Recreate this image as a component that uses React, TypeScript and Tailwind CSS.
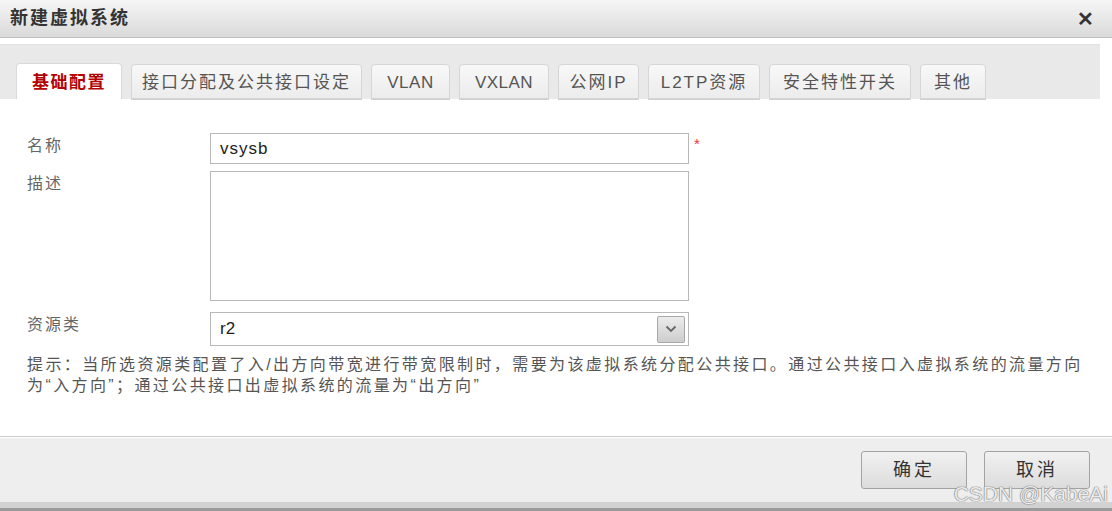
import React from "react";

const tabs = [
  { label: "基础配置", w: "w-[106px]", active: true },
  { label: "接口分配及公共接口设定", w: "w-[231px]" },
  { label: "VLAN", w: "w-[79px]", latin: true },
  { label: "VXLAN", w: "w-[90px]", latin: true },
  { label: "公网IP", w: "w-[81px]" },
  { label: "L2TP资源", w: "w-[112px]" },
  { label: "安全特性开关", w: "w-[142px]" },
  { label: "其他", w: "w-[66px]" },
];

function Tab({
  label,
  w,
  active,
  latin,
}: {
  label: string;
  w: string;
  active?: boolean;
  latin?: boolean;
}) {
  if (active) {
    return (
      <div
        className={`${w} h-[36px] pt-[2px] rounded-t-[4px] border border-b-0 border-[#d9d9d9] bg-white flex items-center justify-center text-[17px] font-bold tracking-[1.5px] text-[#b40000]`}
      >
        {label}
      </div>
    );
  }
  return (
    <div
      className={`${w} h-[35px] pt-[2px] rounded-t-[4px] border border-[#d6d6d6] bg-gradient-to-b from-[#f8f8f8] to-[#ececec] flex items-center justify-center text-[17px] ${
        latin ? "tracking-[0.5px]" : "tracking-[2px]"
      } text-[#555] shadow-[0_1px_0_#d0d0d0]`}
    >
      {label}
    </div>
  );
}

export default function App() {
  return (
    <div
      className="relative w-[1112px] h-[511px] overflow-hidden bg-white flex flex-col"
      style={{ fontFamily: '"Liberation Sans", "Noto Sans CJK SC", sans-serif' }}
    >
      {/* title bar */}
      <div className="h-[38px] shrink-0 flex items-center justify-between pl-[10px] pr-[18px] bg-gradient-to-b from-[#f6f6f6] to-[#dadada] border-b border-[#bfbfbf]">
        <span className="text-[18px] font-bold tracking-[2px] text-[#333]">新建虚拟系统</span>
        <span className="text-[20px] font-bold text-[#333] leading-none">✕</span>
      </div>
      <div className="h-[6px] shrink-0 bg-white" />

      {/* tab strip */}
      <div className="h-[55px] shrink-0 bg-[#e9e9e9] border-t border-[#e2e2e2] flex items-end gap-[9px] pl-[16px] mr-[12px]">
        {tabs.map((t) => (
          <Tab key={t.label} {...t} />
        ))}
      </div>

      {/* content */}
      <div className="flex-1 pt-[34px] pl-[27px] pr-[24px]">
        <div className="flex">
          <div className="w-[183px] pt-[1px] text-[16px] tracking-[2px] text-[#666]">名称</div>
          <div className="w-[479px] h-[31px] border border-[#b8b8b8] flex items-center px-[9px] text-[17px] tracking-[1px] text-[#222]">
            vsysb
          </div>
          <span className="ml-[5px] pt-[3px] text-[15px] leading-none text-[#e8343a]">*</span>
        </div>
        <div className="flex mt-[7px]">
          <div className="w-[183px] pt-[1px] text-[16px] tracking-[2px] text-[#666]">描述</div>
          <div className="w-[479px] h-[130px] border border-[#b8b8b8]" />
        </div>
        <div className="flex mt-[11px]">
          <div className="w-[183px] pt-[1px] text-[16px] tracking-[2px] text-[#666]">资源类</div>
          <div className="w-[479px] h-[34px] border border-[#b8b8b8] flex items-center justify-between pl-[9px] pr-[3px] text-[17px] text-[#222]">
            <span>r2</span>
            <div className="w-[28px] h-[27px] border border-[#a8a8a8] rounded-[2px] bg-gradient-to-b from-[#ececec] to-[#cdcdcd] flex items-center justify-center">
              <svg width="12" height="8" viewBox="0 0 12 8">
                <path d="M1.5 1.5 L6 6 L10.5 1.5" fill="none" stroke="#666" strokeWidth="1.8" />
              </svg>
            </div>
          </div>
        </div>
        <p className="mt-[8px] text-[16px] leading-[21px] tracking-[2.4px] text-[#555]">
          提示：当所选资源类配置了入/出方向带宽进行带宽限制时，需要为该虚拟系统分配公共接口。通过公共接口入虚拟系统的流量方向
          <br />
          为“入方向”；通过公共接口出虚拟系统的流量为“出方向”
        </p>
      </div>

      {/* footer */}
      <div className="h-[75px] shrink-0 flex flex-col">
        <div className="h-[2px] bg-[#cccccc] border-b border-white" />
        <div className="flex-1 bg-[#eeeeee] flex items-start justify-end gap-[17px] pt-[13px] pr-[22px]">
          <button className="w-[106px] h-[38px] rounded-[3px] border border-[#a3a3a3] bg-gradient-to-b from-[#f1f1f1] to-[#dcdcdc] text-[18px] tracking-[3px] text-[#333]">
            确定
          </button>
          <button className="w-[106px] h-[38px] rounded-[3px] border border-[#a3a3a3] bg-gradient-to-b from-[#f1f1f1] to-[#dcdcdc] text-[18px] tracking-[3px] text-[#333]">
            取消
          </button>
        </div>
        <div className="h-[6px] bg-[#d2d2d2]" />
        <div className="h-[3px] bg-[#9a9a9a]" />
      </div>

      {/* watermark */}
      <span className="absolute right-[4px] bottom-[7px] text-[21px] leading-none text-white/85 [text-shadow:0_0_1px_#7a7a7a,0_0_1px_#7a7a7a,0_0_1px_#7a7a7a]">
        CSDN @KabeAi
      </span>
    </div>
  );
}
